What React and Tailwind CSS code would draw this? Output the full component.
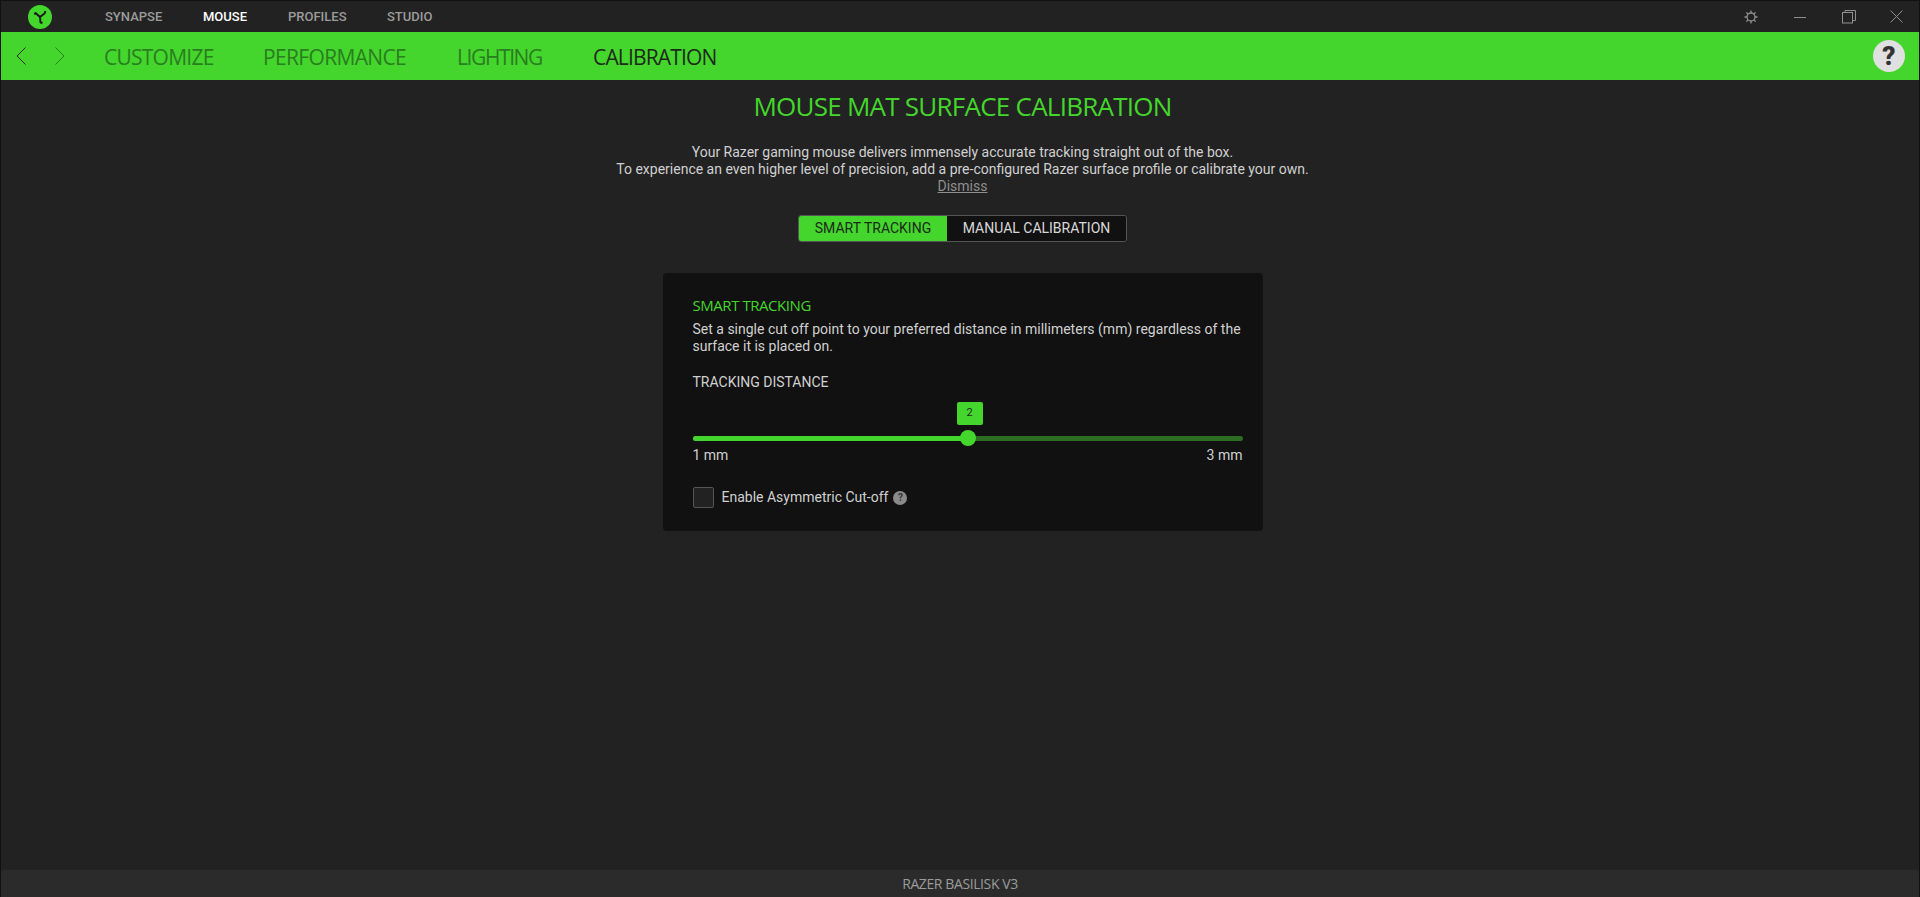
import React from "react";

const GREEN = "#44d62c";

const topTabs = [
  { label: "SYNAPSE", className: "w-[98px] text-[#9b9b9b]" },
  { label: "MOUSE", className: "w-[85px] text-white" },
  { label: "PROFILES", className: "w-[99px] text-[#9b9b9b]" },
  { label: "STUDIO", className: "text-[#9b9b9b]" },
];

const subTabs = [
  { label: "CUSTOMIZE", className: "w-[159px] tracking-[-0.75px] text-[#2a7d20]" },
  { label: "PERFORMANCE", className: "w-[194px] tracking-[-0.65px] text-[#2a7d20]" },
  { label: "LIGHTING", className: "w-[136px] tracking-[-1.4px] text-[#2a7d20]" },
  { label: "CALIBRATION", className: "tracking-[-0.85px] text-[#1d2a1b]" },
];

function Logo() {
  return (
    <svg width="24" height="24" viewBox="0 0 24 24">
      <circle cx="12" cy="12" r="12" fill={GREEN} />
      <path d="M12 12 L12.5 17.5 L14.5 18 M12 12 L7.5 8 L6.5 9.5 M12 12 L16.5 8.5 L17.5 6" stroke="#1a1a1a" strokeWidth="2" strokeLinejoin="round" fill="none" />
    </svg>
  );
}

function Gear() {
  return (
    <svg width="14" height="14" viewBox="0 0 14 14" fill="none" stroke="#8f8f8f">
      <circle cx="7" cy="7" r="4" strokeWidth="1.3" />
      <path d="M7 0.5V3 M7 11V13.5 M0.5 7H3 M11 7H13.5 M2.4 2.4L4 4 M10 10L11.6 11.6 M2.4 11.6L4 10 M10 4L11.6 2.4" strokeWidth="1.3" />
    </svg>
  );
}

function TitleBar() {
  return (
    <div className="flex h-[31px] shrink-0 items-center bg-[#222222]">
      <div className="flex w-[104px] justify-end pr-[53px]">
        <Logo />
      </div>
      {topTabs.map((t) => (
        <span key={t.label} className={`text-[13px] font-medium ${t.className}`}>
          {t.label}
        </span>
      ))}
      <div className="ml-auto flex items-center">
        <div className="flex w-[50px] justify-center pr-[3px]">
          <Gear />
        </div>
        <div className="flex w-[48px] justify-center pr-[3px]">
          <svg width="12" height="12" viewBox="0 0 12 12" stroke="#8f8f8f">
            <path d="M0 6.5H12" />
          </svg>
        </div>
        <div className="flex w-[48px] justify-center">
          <svg width="14" height="14" viewBox="0 0 14 14" fill="none" stroke="#8f8f8f">
            <rect x="0.5" y="2.5" width="10" height="10.5" />
            <path d="M3 2.5V0.5H13.5V10.5H10.5" />
          </svg>
        </div>
        <div className="flex w-[46px] justify-center">
          <svg width="13" height="13" viewBox="0 0 13 13" stroke="#8f8f8f">
            <path d="M0.5 0.5L12.5 12.5 M12.5 0.5L0.5 12.5" />
          </svg>
        </div>
      </div>
    </div>
  );
}

function SubNav() {
  return (
    <div className="flex h-[48px] shrink-0 items-center bg-[#44d62c]">
      <div className="flex w-[103px] items-center">
        <svg className="ml-[15px]" width="10" height="18" viewBox="0 0 10 18" fill="none" stroke="#1d2a1b" strokeWidth="1">
          <path d="M9.5 0.5L1 9L9.5 17.5" />
        </svg>
        <svg className="ml-[29px]" width="10" height="18" viewBox="0 0 10 18" fill="none" stroke="#2a7d20" strokeWidth="1">
          <path d="M0.5 0.5L9 9L0.5 17.5" />
        </svg>
      </div>
      {subTabs.map((t) => (
        <span key={t.label} className={`pt-[4px] font-['Open_Sans',sans-serif] text-[21px] ${t.className}`}>
          {t.label}
        </span>
      ))}
      <div className="ml-auto mr-[14px] flex h-[32px] w-[32px] items-center justify-center rounded-full bg-[#e0e0e0] text-[26px] leading-none font-black text-[#333333]">
        ?
      </div>
    </div>
  );
}

function Slider() {
  return (
    <div className="relative mt-[15px] h-[5px] rounded-full bg-[#2b6e21]">
      <div className="h-full w-[275px] rounded-full bg-[#44d62c]" />
      <div className="absolute top-[-6px] left-[267px] h-[16px] w-[16px] rounded-full bg-[#44d62c]" />
      <div className="absolute top-[-34px] left-[264px] flex h-[23px] w-[26px] items-center justify-center rounded-[2px] bg-[#44d62c] text-[11px] text-[#1d2a1b]">
        2
      </div>
    </div>
  );
}

function Card() {
  return (
    <div className="mt-[31px] h-[258px] w-[600px] rounded-[4px] bg-[#111111] px-[30px] pt-[23px] pr-[20px]">
      <div className="font-['Open_Sans',sans-serif] text-[15px] leading-[19px] tracking-[-0.45px] text-[#44d62c]">SMART TRACKING</div>
      <p className="mt-[6px] text-[14px] leading-[17px] text-[#d0d0d0]">
        Set a single cut off point to your preferred distance in millimeters (mm) regardless of the surface it is placed on.
      </p>
      <div className="mt-[19px] text-[14px] leading-[17px] text-[#d0d0d0]">TRACKING DISTANCE</div>
      <div className="pt-[30px]">
        <Slider />
      </div>
      <div className="mt-[6px] flex justify-between text-[14px] leading-[17px] text-[#d0d0d0]">
        <span>1 mm</span>
        <span>3 mm</span>
      </div>
      <div className="mt-[23px] flex items-center">
        <div className="h-[21px] w-[21px] rounded-[2px] border border-[#555555] bg-[#222222]" />
        <span className="ml-[8px] text-[14px] text-[#d0d0d0]">Enable Asymmetric Cut-off</span>
        <span className="ml-[5px] flex h-[14px] w-[14px] items-center justify-center rounded-full bg-[#8a8a8a] text-[10px] font-bold text-[#333333]">
          ?
        </span>
      </div>
    </div>
  );
}

export default function App() {
  return (
    <div className="flex h-[897px] w-[1920px] flex-col overflow-hidden border-x border-t border-[#111111] bg-[#222222] font-['Roboto',sans-serif]">
      <TitleBar />
      <SubNav />
      <main className="flex flex-1 flex-col items-center pl-[5px]">
        <h1 className="mt-[9px] font-['Open_Sans',sans-serif] text-[26px] leading-[34px] font-normal tracking-[-0.75px] text-[#44d62c]">
          MOUSE MAT SURFACE CALIBRATION
        </h1>
        <p className="mt-[21px] text-center text-[14px] leading-[17px] text-[#d0d0d0]">
          Your Razer gaming mouse delivers immensely accurate tracking straight out of the box.
          <br />
          To experience an even higher level of precision, add a pre-configured Razer surface profile or calibrate your own.
          <br />
          <span className="text-[#8f8f8f] underline">Dismiss</span>
        </p>
        <div className="mt-[20px] flex h-[27px] w-[329px] overflow-hidden rounded-[3px] border border-[#555555] text-[14px]">
          <div className="flex w-[148px] items-center justify-center bg-[#44d62c] text-[#1d2a1b]">SMART TRACKING</div>
          <div className="flex flex-1 items-center justify-center bg-[#111111] text-[#d8d8d8]">MANUAL CALIBRATION</div>
        </div>
        <Card />
      </main>
      <footer className="flex h-[27px] shrink-0 items-center justify-center bg-[#2b2b2b] font-['Open_Sans',sans-serif] text-[14px] tracking-[-0.4px] text-[#9b9b9b]">
        RAZER BASILISK V3
      </footer>
    </div>
  );
}
